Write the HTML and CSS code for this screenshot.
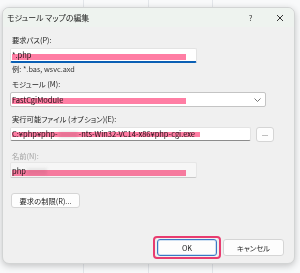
FILE: index.html
```html
<!DOCTYPE html>
<html lang="ja">
<head>
<meta charset="utf-8">
<title>モジュール マップの編集</title>
<link rel="stylesheet" href="styles.css">
</head>
<body>
<div class="desk">
  <div class="dialog">
    <div class="titlebar">
      <span class="title">モジュール マップの編集</span>
      <span class="tb-btn">?</span>
      <span class="tb-btn"><svg width="8" height="8" viewBox="0 0 8 8"><path d="M1 1L7 7M7 1L1 7" stroke="#333" stroke-width="1" fill="none"/></svg></span>
    </div>
    <div class="body">
      <div class="lbl first">要求パス(P):</div>
      <div class="field focused w187"><span class="val">*.php</span><span class="mark m1"></span></div>
      <div class="hint">例: *.bas, wsvc.axd</div>

      <div class="lbl l2">モジュール (M):</div>
      <div class="field combo"><span class="val">FastCgiModule</span><svg class="chev" width="7" height="4" viewBox="0 0 7 4"><path d="M0.5 0.5L3.5 3.5L6.5 0.5" stroke="#666" stroke-width="0.9" fill="none"/></svg><span class="mark m2"></span></div>

      <div class="lbl l3">実行可能ファイル (オプション)(E):</div>
      <div class="row">
        <div class="field path"><span class="val">C:¥php¥php-<span class="blur b1"></span>-nts-Win32-VC14-x86¥php-cgi.exe</span><span class="mark m3"></span></div>
        <div class="btn dots">...</div>
      </div>

      <div class="lbl l4 disabled">名前(N):</div>
      <div class="field readonly w187"><span class="val">php<span class="blur b2"></span></span><span class="mark m4"></span></div>

      <div class="btn restrict">要求の制限(R)...</div>

      <div class="footer">
        <span class="ring"><span class="btn ok">OK</span></span>
        <span class="btn cancel">キャンセル</span>
      </div>
    </div>
  </div>
</div>
</body>
</html>
```
FILE: styles.css
```css
* { box-sizing: border-box; }
body {
  margin: 0;
  background: #f6f7f8;
  font-family: "Noto Sans CJK JP", "Noto Sans", sans-serif;
  font-feature-settings: "palt";
  color: #1b1b1b;
  font-size: 7.3px;
}
.desk {
  width: 300px;
  height: 273px;
  overflow: hidden;
  padding-top: 7px;
  padding-left: 2px;
  background:
    linear-gradient(#e3e6ea, #e3e6ea) 83px 0 / 1px 100% no-repeat,
    linear-gradient(#e3e6ea, #e3e6ea) 148px 0 / 1px 100% no-repeat,
    linear-gradient(#e3e6ea, #e3e6ea) 212px 0 / 1px 100% no-repeat,
    #f8f9fa;
}
.dialog {
  width: 293px;
  height: 257px;
  border: 1px solid #d2d4d4;
  border-radius: 7px;
  background: #f0f0f0;
  box-shadow: 0 2px 7px rgba(0, 0, 0, 0.22);
  overflow: hidden;
  display: flex;
  flex-direction: column;
}
.titlebar {
  height: 19px;
  flex: none;
  background: #eef3ef;
  display: flex;
  align-items: center;
  padding-left: 4px;
}
.title { flex: 1; font-size: 7.9px; }
.tb-btn {
  width: 29px;
  height: 19px;
  display: flex;
  align-items: center;
  justify-content: center;
  font-size: 7.5px;
  color: #333;
}
.body {
  flex: 1;
  display: flex;
  flex-direction: column;
  padding: 0 10px 4px 7px;
}
.lbl, .hint {
  line-height: 10px;
  height: 10px;
  padding-left: 2px;
  white-space: nowrap;
}
.lbl.first { margin-top: 8px; }
.hint { margin-top: 1px; color: #333; }
.l2 { margin-top: 5px; }
.l3 { margin-top: 7px; }
.l4 { margin-top: 9px; }
.disabled { color: #a2a2a2; }
.field {
  position: relative;
  height: 15px;
  margin-top: 3px;
  background: #fff;
  border: 1px solid #e3e3e3;
  border-bottom-color: #8c8c8c;
  border-radius: 2px;
  line-height: 13px;
  padding-left: 1px;
  white-space: nowrap;
  flex: none;
  font-size: 7.5px;
}
.val { position: relative; }
.w187 { width: 187px; }
.focused { border-bottom: 2px solid #0a5fb4; line-height: 12px; }
.combo {
  width: 256px;
  border: 1px solid #c4c4c4;
  display: flex;
  align-items: center;
  justify-content: space-between;
  padding-right: 4px;
}
.row {
  margin-top: 3px;
  display: flex;
  gap: 5px;
  height: 15px;
}
.row .field { margin-top: 0; }
.path { width: 241px; height: 14px; line-height: 12px; }
.readonly {
  height: 16px;
  margin-top: 1px;
  background: #f6f6f6;
  border-color: #e6e6e6;
  border-bottom-color: #c9c9c9;
  line-height: 15px;
}
.blur {
  display: inline-block;
  height: 7px;
  vertical-align: middle;
  background: #e2e2e2;
  filter: blur(1.5px);
  opacity: 0.8;
}
.b1 { width: 19px; margin: 0 1px; }
.b2 { width: 20px; margin-left: 1px; }
.mark {
  position: absolute;
  left: 1px;
  background: #ff7ea4;
  mix-blend-mode: multiply;
  pointer-events: none;
}
.m1 { top: 5px; width: 174px; height: 6px; }
.m2 { top: 5px; width: 174px; height: 6px; }
.m3 { top: 4px; width: 188px; height: 5px; }
.m4 { top: 7px; width: 174px; height: 6px; }
.btn {
  display: flex;
  align-items: center;
  justify-content: center;
  background: #fdfdfd;
  border: 1px solid #d5d5d5;
  border-radius: 3px;
  white-space: nowrap;
  color: #1b1b1b;
}
.dots { width: 18px; height: 15px; line-height: 1; padding-bottom: 2px; }
.restrict {
  margin-top: 15px;
  margin-left: 1px;
  width: 69px;
  height: 15px;
  flex: none;
}
.footer {
  margin-top: auto;
  display: flex;
  justify-content: flex-end;
  align-items: center;
  gap: 2px;
}
.ring {
  border: 2px solid #e83c70;
  border-radius: 4px;
  padding: 1px 2px;
  display: flex;
}
.ok {
  width: 60px;
  height: 17px;
  border: 1px solid #3a78c4;
  box-shadow: inset 0 0 0 1px #cfe0f2;
}
.cancel { width: 61px; height: 17px; }
```
